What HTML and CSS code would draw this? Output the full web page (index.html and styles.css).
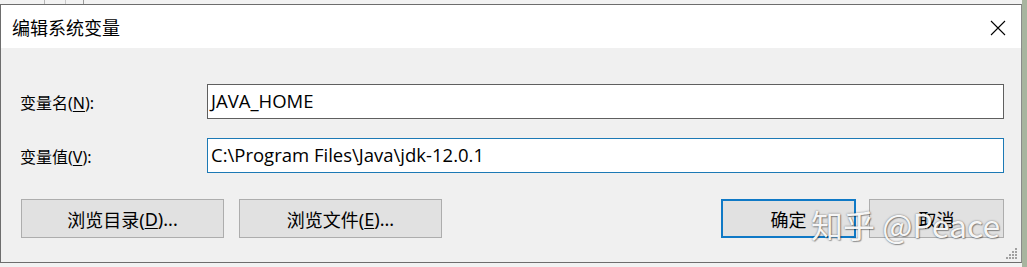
FILE: index.html
```html
<!DOCTYPE html>
<html lang="zh-CN">
<head>
<meta charset="utf-8">
<title>编辑系统变量</title>
<link rel="stylesheet" href="styles.css">
</head>
<body>
<div class="backdrop">
  <div class="dialog">
    <div class="titlebar">
      <span class="title">编辑系统变量</span>
      <svg class="close" width="16" height="16" viewBox="0 0 16 16"><path d="M1 1 L15 15 M15 1 L1 15" stroke="#000" stroke-width="1.1" fill="none"/></svg>
    </div>
    <div class="content">
      <div class="row">
        <label class="label">变量名(<u>N</u>):</label>
        <div class="input">JAVA_HOME</div>
      </div>
      <div class="row row2">
        <label class="label">变量值(<u>V</u>):</label>
        <div class="input focused">C:\Program Files\Java\jdk-12.0.1</div>
      </div>
      <div class="buttons">
        <div class="btn wide">浏览目录(<u>D</u>)...</div>
        <div class="btn wide">浏览文件(<u>E</u>)...</div>
        <div class="spacer"></div>
        <div class="btn narrow primary">确定</div>
        <div class="btn narrow">取消</div>
      </div>
      <svg class="grip" width="12" height="12" viewBox="0 0 12 12">
        <rect x="9" y="1" width="2" height="2" fill="#a0a0a0"/>
        <rect x="6" y="4" width="2" height="2" fill="#a0a0a0"/>
        <rect x="9" y="4" width="2" height="2" fill="#a0a0a0"/>
        <rect x="3" y="7" width="2" height="2" fill="#a0a0a0"/>
        <rect x="6" y="7" width="2" height="2" fill="#a0a0a0"/>
        <rect x="9" y="7" width="2" height="2" fill="#a0a0a0"/>
        <rect x="0" y="10" width="2" height="2" fill="#a0a0a0"/>
        <rect x="3" y="10" width="2" height="2" fill="#a0a0a0"/>
        <rect x="6" y="10" width="2" height="2" fill="#a0a0a0"/>
        <rect x="9" y="10" width="2" height="2" fill="#a0a0a0"/>
      </svg>
      <div class="watermark">知乎 @Peace</div>
    </div>
  </div>
</div>
</body>
</html>
```
FILE: styles.css
```css
html, body {
  margin: 0;
  padding: 0;
  width: 1027px;
  height: 267px;
  overflow: hidden;
}
body {
  background: linear-gradient(to right, #f2f2f2 0, #f2f2f2 1022px, #a7b59f 1022px, #a7b59f 100%);
  font-family: "Noto Sans", "Noto Sans CJK SC", sans-serif;
  color: #000;
}
.backdrop {
  padding-top: 4px;
  height: 263px;
  box-sizing: border-box;
  background:
    linear-gradient(to right, transparent 44px, #b5b5b5 44px, #b5b5b5 45px, transparent 45px, transparent 65px, #c8c8c8 65px, #c8c8c8 66px, transparent 66px, transparent 83px, #9a9a9a 83px, #9a9a9a 84px, transparent 84px);
}
.dialog {
  width: 1022px;
  height: 259px;
  box-sizing: border-box;
  border: 1px solid #6d6d6d;
  border-right-color: #8a8a8a;
  display: flex;
  flex-direction: column;
  background: #f0f0f0;
}
.titlebar {
  height: 43px;
  background: #fff;
  display: flex;
  align-items: center;
  justify-content: space-between;
  padding: 0 15px 0 11px;
  flex: none;
}
.title {
  font-size: 18px;
  font-family: "Noto Sans CJK SC", sans-serif;
  letter-spacing: 0;
  margin-top: 1px;
}
.close {
  margin-top: 2px;
}
.content {
  position: relative;
  flex: 1;
  padding: 36px 17px 0 19px;
}
.row {
  display: flex;
  align-items: center;
}
.row2 {
  margin-top: 19px;
}
.label {
  width: 187px;
  flex: none;
  font-size: 16px;
  font-family: "Noto Sans", "Noto Sans CJK SC", sans-serif;
}
.label u, .btn u {
  text-underline-offset: 2px;
}
.input {
  width: 797px;
  height: 35px;
  box-sizing: border-box;
  border: 1px solid #5f5f5f;
  background: #fff;
  font-size: 18.5px;
  line-height: 32px;
  padding-left: 3px;
  font-family: "Open Sans", "Noto Sans CJK SC", sans-serif;
  white-space: nowrap;
}
.input.focused {
  border-color: #1c79b5;
}
.buttons {
  display: flex;
  margin-top: 26px;
  margin-left: 1px;
  gap: 15px;
  align-items: center;
}
.btn {
  height: 39px;
  box-sizing: border-box;
  border: 1px solid #adadad;
  background: #e1e1e1;
  display: flex;
  align-items: center;
  justify-content: center;
  font-size: 18px;
  font-family: "Noto Sans", "Noto Sans CJK SC", sans-serif;
}
.btn.wide {
  width: 203px;
}
.btn.narrow {
  width: 135px;
}
.btn.primary {
  border: 2px solid #0f79c6;
  margin-right: -2px;
}
.spacer {
  flex: 1;
}
.grip {
  position: absolute;
  right: 3px;
  bottom: 3px;
}
.watermark {
  position: absolute;
  left: 810px;
  top: 153px;
  font-size: 32px;
  font-family: "Noto Sans CJK SC", sans-serif;
  color: rgba(255, 255, 255, 0.94);
  text-shadow: 0 0 2px rgba(0, 0, 0, 0.5), 1px 1px 1px rgba(0, 0, 0, 0.3);
  white-space: nowrap;
  letter-spacing: 0;
}
```
